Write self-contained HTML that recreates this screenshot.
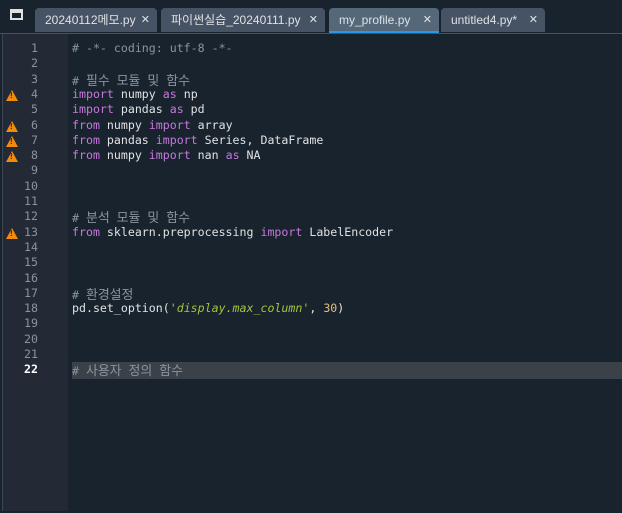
<!DOCTYPE html>
<html><head><meta charset="utf-8"><style>
*{margin:0;padding:0;box-sizing:border-box}
body{width:622px;height:513px;background:#19232d;overflow:hidden;position:relative;font-family:"DejaVu Sans Mono","Liberation Mono","Noto Sans CJK KR",monospace}
.tab{position:absolute;top:8px;height:24px;background:#455364;border-radius:4px 4px 0 0;color:#e0e1e3;font-family:"Liberation Sans","Noto Sans CJK KR",sans-serif;font-size:12px;line-height:24px;padding-left:10px;white-space:nowrap}
.tab .x{position:absolute;right:7px;top:0;font-size:11px}
.act{background:#54687a}
.act:after{content:"";position:absolute;left:0;right:0;bottom:-2px;height:3px;background:#259ae9}
.sep{position:absolute;top:33px;left:0;right:0;height:1px;background:#455364}
.gut{position:absolute;left:2px;top:34px;width:66px;height:477px;background:#232a35;border-left:1px solid #3a4656}
.ln{position:absolute;left:10px;width:28px;text-align:right;color:#8a949e;font-size:11.6px}
.cl{position:absolute;left:72px;color:#e0e1e3;font-size:11.6px;white-space:pre}
.ko{font-family:"Noto Sans CJK KR",sans-serif;font-size:12.9px}
.k{color:#c678dd}.c{color:#8b949e}.s{color:#a8c23b;font-style:italic}.n{color:#e5c07b}
.w{position:absolute;left:6px;width:0;height:0;border-left:6px solid transparent;border-right:6px solid transparent;border-bottom:11px solid #f28a0c}
.w:after{content:"!";position:absolute;left:-2px;top:1px;font-size:8px;color:#19232d;font-weight:bold;font-family:"Liberation Sans",sans-serif}
</style></head><body>
<div style="position:absolute;left:10px;top:9px;width:13px;height:11px;border:2px solid #e0e1e3;border-top-width:4px"></div>
<div class="tab" style="left:35px;width:122px">20240112메모.py<span class="x">✕</span></div>
<div class="tab" style="left:161px;width:164px">파이썬실습_20240111.py<span class="x">✕</span></div>
<div class="tab act" style="left:329px;width:110px">my_profile.py<span class="x">✕</span></div>
<div class="tab" style="left:441px;width:104px">untitled4.py*<span class="x">✕</span></div>
<div class="sep"></div>
<div class="gut"></div>
<div style="position:absolute;left:72px;top:362px;width:550px;height:17px;background:#3a4148"></div>
<div id="lines"></div>
<script>
function ko(s){return s.replace(/([\uac00-\ud7a3]+)/g,'<span class="ko">$1</span>');}
var code={1:'<span class="c"># -*- coding: utf-8 -*-</span>',3:'<span class="c">'+ko('# 필수 모듈 및 함수')+'</span>',
4:'<span class="k">import</span> numpy <span class="k">as</span> np',5:'<span class="k">import</span> pandas <span class="k">as</span> pd',
6:'<span class="k">from</span> numpy <span class="k">import</span> array',7:'<span class="k">from</span> pandas <span class="k">import</span> Series, DataFrame',
8:'<span class="k">from</span> numpy <span class="k">import</span> nan <span class="k">as</span> NA',12:'<span class="c">'+ko('# 분석 모듈 및 함수')+'</span>',
13:'<span class="k">from</span> sklearn.preprocessing <span class="k">import</span> LabelEncoder',17:'<span class="c">'+ko('# 환경설정')+'</span>',
18:'pd.set_option(<span class="s">\'display.max_column\'</span>, <span class="n">30</span>)',22:'<span class="c">'+ko('# 사용자 정의 함수')+'</span>'};
var warn=[4,6,7,8,13],h='';
for(var i=1;i<=22;i++){var y=41+(i-1)*15.3;
h+='<div class="ln" style="top:'+y+'px'+(i==22?';color:#fff;font-weight:bold':'')+'">'+i+'</div>';
if(code[i])h+='<div class="cl" style="top:'+(code[i].indexOf('ko')>0?y-2:y)+'px">'+code[i]+'</div>';
if(warn.indexOf(i)>=0)h+='<div class="w" style="top:'+(y+3)+'px"></div>';}
document.getElementById('lines').innerHTML=h;
</script>
</body></html>
